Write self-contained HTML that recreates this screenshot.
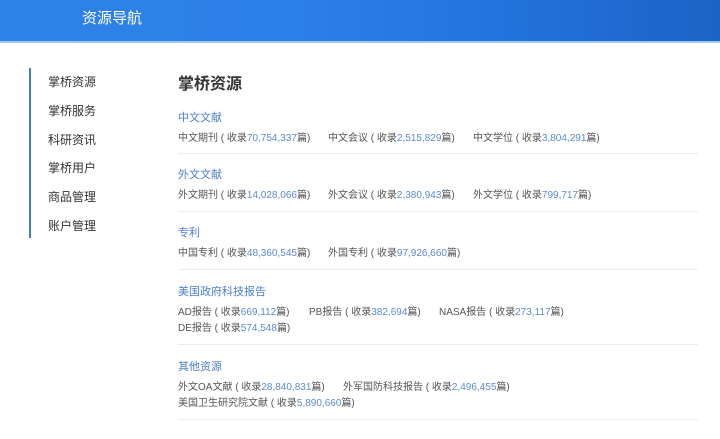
<!DOCTYPE html>
<html><head><meta charset="utf-8"><style>
*{margin:0;padding:0;box-sizing:border-box}
body{width:720px;height:439px;overflow:hidden;background:#fff;font-family:"Liberation Sans","Noto Sans CJK SC",sans-serif;position:relative}
.hd{position:absolute;left:0;top:0;width:720px;height:43px;background:linear-gradient(90deg,#2f82e6 0%,#2d80e8 40%,#2373dc 70%,#1c63c6 100%);border-bottom:2px solid #9ccaf5}
.hd span{position:absolute;left:82px;top:7px;color:#fff;font-size:15px}
.side{position:absolute;left:29px;top:68px;height:170px;border-left:2px solid #3f7dd0}
.side div{position:absolute;left:17px;width:80px;font-size:12px;color:#333;white-space:nowrap}
.t{position:absolute;font-size:11px;color:#4a7fcf;white-space:nowrap}
.r{position:absolute;font-size:10px;color:#555;white-space:nowrap}
.r b{font-weight:normal;color:#5a8ad4}
.hr{position:absolute;left:178px;width:520px;height:1px;background:#ebebeb}
</style></head><body>
<div class="hd"><span>资源导航</span></div>
<div class="side">
<div style="top:5px">掌桥资源</div><div style="top:34px">掌桥服务</div><div style="top:63px">科研资讯</div><div style="top:91px">掌桥用户</div><div style="top:120px">商品管理</div><div style="top:149px">账户管理</div>
</div>
<div style="position:absolute;left:178px;top:70px;font-size:16px;font-weight:bold;color:#333">掌桥资源</div>

<div class="t" style="left:178px;top:109px">中文文献</div>
<div class="r" style="left:178px;top:129px">中文期刊 ( 收录<b>70,754,337</b>篇)</div>
<div class="r" style="left:328px;top:129px">中文会议 ( 收录<b>2,515,829</b>篇)</div>
<div class="r" style="left:473px;top:129px">中文学位 ( 收录<b>3,804,291</b>篇)</div>
<div class="hr" style="top:153px"></div>

<div class="t" style="left:178px;top:166px">外文文献</div>
<div class="r" style="left:178px;top:186px">外文期刊 ( 收录<b>14,028,066</b>篇)</div>
<div class="r" style="left:328px;top:186px">外文会议 ( 收录<b>2,380,943</b>篇)</div>
<div class="r" style="left:473px;top:186px">外文学位 ( 收录<b>799,717</b>篇)</div>
<div class="hr" style="top:211px"></div>

<div class="t" style="left:178px;top:224px">专利</div>
<div class="r" style="left:178px;top:244px">中国专利 ( 收录<b>48,360,545</b>篇)</div>
<div class="r" style="left:328px;top:244px">外国专利 ( 收录<b>97,926,660</b>篇)</div>
<div class="hr" style="top:269px"></div>

<div class="t" style="left:178px;top:283px">美国政府科技报告</div>
<div class="r" style="left:178px;top:303px">AD报告 ( 收录<b>669,112</b>篇)</div>
<div class="r" style="left:309px;top:303px">PB报告 ( 收录<b>382,694</b>篇)</div>
<div class="r" style="left:439px;top:303px">NASA报告 ( 收录<b>273,117</b>篇)</div>
<div class="r" style="left:178px;top:319px">DE报告 ( 收录<b>574,548</b>篇)</div>
<div class="hr" style="top:344px"></div>

<div class="t" style="left:178px;top:358px">其他资源</div>
<div class="r" style="left:178px;top:378px">外文OA文献 ( 收录<b>28,840,831</b>篇)</div>
<div class="r" style="left:343px;top:378px">外军国防科技报告 ( 收录<b>2,496,455</b>篇)</div>
<div class="r" style="left:178px;top:394px">美国卫生研究院文献 ( 收录<b>5,890,660</b>篇)</div>
<div class="hr" style="top:419px"></div>
</body></html>
